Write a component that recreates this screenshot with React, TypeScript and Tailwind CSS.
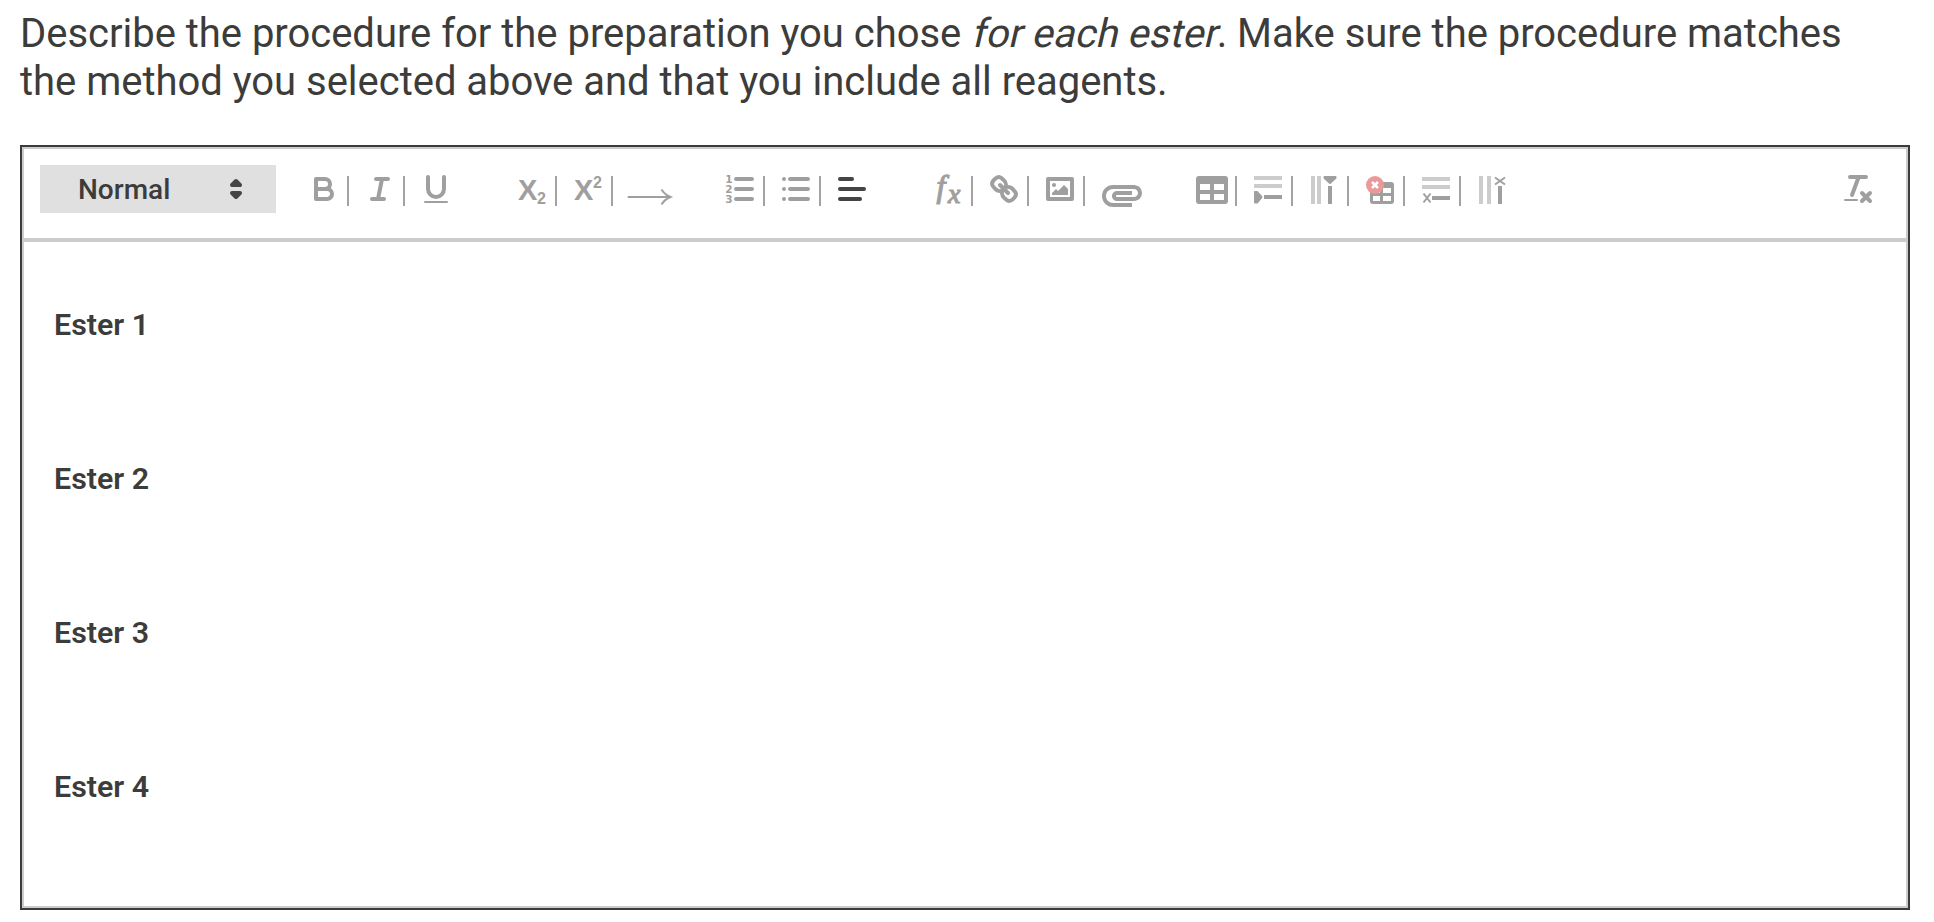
import type { ReactNode } from "react";

const esters = ["Ester 1", "Ester 2", "Ester 3", "Ester 4"];

// 18-unit editor icon, doubled
const Icon = ({ children }: { children: ReactNode }) => (
  <svg className="m-1.5 size-9 fill-none" viewBox="0 0 18 18" stroke="currentColor" strokeWidth={2} strokeLinecap="round" strokeLinejoin="round">
    {children}
  </svg>
);

// icon drawn on the full 48px button
const WideIcon = ({ children }: { children: ReactNode }) => (
  <svg className="size-12 overflow-visible" viewBox="0 0 48 48" fill="currentColor">
    {children}
  </svg>
);

const Tool = ({ label, last, children }: { label: string; last?: boolean; children: ReactNode }) => (
  <button aria-label={label} className="flex h-12 w-14 items-center">
    <span className="size-12 shrink-0">{children}</span>
    {!last && <span className="-ml-[1.5px] mt-[3px] h-[30px] w-[2px] shrink-0 bg-[#a3a3a3]" />}
  </button>
);

const Group = ({ children }: { children: ReactNode }) => <div className="flex">{children}</div>;

const App = () => {
  return (
    <div className="h-[922px] w-full overflow-hidden bg-white px-5 pt-[10px] font-['Roboto',sans-serif] text-[#3c3c3b]">
      <p className="h-[135px] text-[40px] leading-[48px] tracking-[-0.022px]">
        Describe the procedure for the preparation you chose{" "}
        <em className="inline-block origin-[0_37px] -skew-x-[13deg] not-italic">for each ester</em>. Make sure the procedure matches
        <br />
        the method you selected above and that you include all reagents.
      </p>

      <div className="h-[765px] w-[1890px] border-2 border-[#3c3c3b]">
        <div className="flex h-full flex-col border-2 border-[#ccc]">
          {/* Toolbar */}
          <div className="flex h-[93px] shrink-0 items-start border-b-4 border-[#ccc] px-4 pt-4 text-[#9f9f9f]">
            <div className="mr-6 flex h-12 w-[236px] items-center justify-between bg-[#e0e0e0] pl-[38px] pr-4 text-[#444]">
              <span className="pt-[2px] text-[28px] font-medium leading-[48px] text-[#3c3c3b]">Normal</span>
              <Icon>
                <polygon points="7 11 9 13 11 11 7 11" />
                <polygon points="7 7 9 5 11 7 7 7" />
              </Icon>
            </div>

            <div className="flex gap-10">
              <Group>
                <Tool label="bold">
                  <Icon>
                    <path d="M5,4H9.5A2.5,2.5,0,0,1,12,6.5v0A2.5,2.5,0,0,1,9.5,9H5V4" />
                    <path d="M5,9h5.5A2.5,2.5,0,0,1,13,11.5v0A2.5,2.5,0,0,1,10.5,14H5V9" />
                  </Icon>
                </Tool>
                <Tool label="italic">
                  <Icon>
                    <path d="M7 4H13M5 14H11M8 14L10 4" />
                  </Icon>
                </Tool>
                <Tool label="underline" last>
                  <Icon>
                    <path d="M5,3V9a4.012,4.012,0,0,0,4,4H9a4.012,4.012,0,0,0,4-4V3" />
                    <rect x="3" y="15" width="12" height="1" rx="0.5" fill="currentColor" stroke="none" />
                  </Icon>
                </Tool>
              </Group>

              <Group>
                <Tool label="subscript">
                  <WideIcon>
                    <text x="10" y="35" className="font-['Liberation_Sans',sans-serif] text-[29px] font-bold">X</text>
                    <text x="29" y="39" className="font-['Liberation_Sans',sans-serif] text-[16px] font-bold">2</text>
                  </WideIcon>
                </Tool>
                <Tool label="superscript">
                  <WideIcon>
                    <text x="10" y="35" className="font-['Liberation_Sans',sans-serif] text-[29px] font-bold">X</text>
                    <text x="29" y="23" className="font-['Liberation_Sans',sans-serif] text-[16px] font-bold">2</text>
                  </WideIcon>
                </Tool>
                <Tool label="arrow" last>
                  <WideIcon>
                    <path d="M7.700 32H50M41.500 24.500Q44.500 29.500 50.500 32Q44.500 34.500 41.500 39.500" fill="none" stroke="currentColor" strokeWidth={2} />
                  </WideIcon>
                </Tool>
              </Group>

              <Group>
                <Tool label="ordered list">
                  <WideIcon>
                    <path d="M20 14H36M20 24H36M20 34H36" stroke="currentColor" strokeWidth={4} strokeLinecap="round" />
                    <g className="font-['DejaVu_Sans',sans-serif] text-[10.5px] font-bold">
                      <text x="9.300" y="18">1</text>
                      <text x="9.300" y="28">2</text>
                      <text x="9.300" y="38">3</text>
                    </g>
                  </WideIcon>
                </Tool>
                <Tool label="bullet list">
                  <Icon>
                    <path d="M6 4H15M6 9H15M6 14H15M3 4H3M3 9H3M3 14H3" />
                  </Icon>
                </Tool>
                <Tool label="align" last>
                  <div className="text-[#444]">
                    <Icon>
                      <path d="M3 9H15M3 14H13M3 4H9" />
                    </Icon>
                  </div>
                </Tool>
              </Group>

              <Group>
                <Tool label="formula">
                  <WideIcon>
                    <g className="font-['Liberation_Serif',serif] italic" stroke="currentColor" strokeWidth={1.2}>
                      <text x="12.500" y="31.500" className="text-[32px]">f</text>
                      <text x="24" y="37.500" className="text-[28px]">x</text>
                    </g>
                  </WideIcon>
                </Tool>
                <Tool label="link">
                  <Icon>
                    <path d="M7 7L11 11" />
                    <path d="M8.9,4.577a3.476,3.476,0,0,1,.36,4.679A3.476,3.476,0,0,1,4.577,8.9C3.185,7.5,2.035,6.4,4.217,4.217S7.5,3.185,8.9,4.577Z" />
                    <path d="M13.423,9.1a3.476,3.476,0,0,0-4.679-.36,3.476,3.476,0,0,0,.36,4.679c1.392,1.392,2.5,2.542,4.679.36S14.815,10.5,13.423,9.1Z" />
                  </Icon>
                </Tool>
                <Tool label="image">
                  <Icon>
                    <rect x="3" y="4" width="12" height="10" />
                    <g fill="currentColor" stroke="none">
                      <circle cx="6" cy="7" r="1" />
                      <polygon points="5 12 5 11 7 9 8 10 11 7 13 9 13 12 5 12" />
                    </g>
                  </Icon>
                </Tool>
                <Tool label="attachment" last>
                  <svg className="ml-1.5 mt-1.5 size-12 fill-current" viewBox="0 0 24 24">
                    <path d="M2 12.500C2 9.460 4.460 7 7.500 7H18c2.210 0 4 1.790 4 4s-1.790 4-4 4H9.500C8.120 15 7 13.880 7 12.500S8.120 10 9.500 10H17v2H9.410c-.55 0-.55 1 0 1H18c1.100 0 2-.9 2-2s-.9-2-2-2H7.500C5.570 9 4 10.570 4 12.500S5.570 16 7.500 16H17v2H7.500C4.460 18 2 15.540 2 12.500z" />
                  </svg>
                </Tool>
              </Group>

              <Group>
                <Tool label="insert table">
                  <WideIcon>
                    <path fillRule="evenodd" d="M11 11H37a3 3 0 0 1 3 3V36a3 3 0 0 1-3 3H11a3 3 0 0 1-3-3V14a3 3 0 0 1 3-3ZM12 19V25H22V19ZM26 19V25H36V19ZM12 29V35H22V29ZM26 29V35H36V29Z" />
                  </WideIcon>
                </Tool>
                <Tool label="insert row">
                  <WideIcon>
                    <path d="M10 11H38V15H10ZM10 19H38V23H10Z" className="fill-[#ccc]" />
                    <path d="M20 30H38V34H20Z" />
                    <path d="M11 27H13L17.500 32L13 37.500H11Z" stroke="currentColor" strokeWidth={2} strokeLinejoin="round" />
                  </WideIcon>
                </Tool>
                <Tool label="insert column">
                  <WideIcon>
                    <path d="M11 11H15V39H11ZM17 11H21V39H17Z" className="fill-[#ccc]" />
                    <path d="M28 21H32V39H28Z" />
                    <path d="M24.500 12H35.500V13L30 18L24.500 13Z" stroke="currentColor" strokeWidth={2} strokeLinejoin="round" />
                  </WideIcon>
                </Tool>
                <Tool label="delete table">
                  <WideIcon>
                    <path fillRule="evenodd" d="M20 17H35a3 3 0 0 1 3 3V36a3 3 0 0 1-3 3H17a3 3 0 0 1-3-3V17ZM17 23V28H24V23ZM27 23V28H35V23ZM17 31V36H24V31ZM27 31V36H35V31Z" />
                    <circle cx="19" cy="20" r="9" className="fill-[#eb9898]" />
                    <path d="M16 17L22 23M22 17L16 23" stroke="white" strokeWidth={2.5} />
                  </WideIcon>
                </Tool>
                <Tool label="delete row">
                  <WideIcon>
                    <path d="M10 12H38V16H10ZM10 20H38V24H10Z" className="fill-[#ccc]" />
                    <path d="M20 31H38V35H20Z" />
                    <path d="M11.500 28.500L18.500 37.500M18.500 28.500L11.500 37.500" stroke="currentColor" strokeWidth={2} />
                  </WideIcon>
                </Tool>
                <Tool label="delete column" last>
                  <WideIcon>
                    <path d="M11 11H15V39H11ZM19 11H23V39H19Z" className="fill-[#ccc]" />
                    <path d="M30 21H34V39H30Z" />
                    <path d="M27 12.500L37 19.500M37 12.500L27 19.500" stroke="currentColor" strokeWidth={2} />
                  </WideIcon>
                </Tool>
              </Group>
            </div>

            <button aria-label="clear formatting" className="ml-auto mr-2">
              <Icon>
                <path d="M5 3H13M6 12L9.350 3M11 11L15 15M15 11L11 15" />
                <rect x="2" y="14" width="7" height="1" rx="0.5" fill="currentColor" stroke="none" />
              </Icon>
            </button>
          </div>

          {/* Editor content */}
          <div className="flex flex-col gap-[106px] px-[30px] pt-[59px] text-[30.4px] font-semibold leading-[48px]">
            {esters.map((name) => (
              <p key={name}>{name}</p>
            ))}
          </div>
        </div>
      </div>
    </div>
  );
};

export default App;
